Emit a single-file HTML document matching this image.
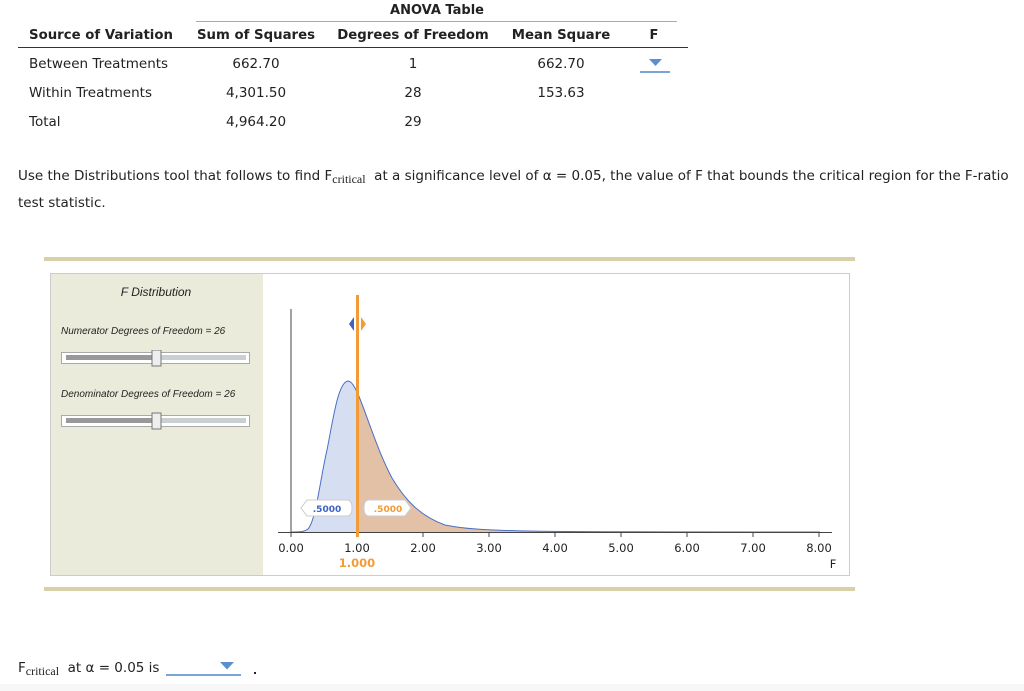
<!DOCTYPE html>
<html><head><meta charset="utf-8"><style>
body{margin:0;width:1024px;height:691px;background:#fff;font-family:"DejaVu Sans","Liberation Sans",sans-serif;color:#222;position:relative;overflow:hidden}
.a{position:absolute;white-space:nowrap}
.b{font-weight:bold;font-size:13px}
.t{font-size:13.5px}
.c{transform:translateX(-50%)}
.i{font-family:"Liberation Sans",sans-serif;font-style:italic;font-size:11px;color:#222}
</style></head><body>
<div class="a b c" style="left:437px;top:3px">ANOVA Table</div>
<div style="position:absolute;left:196px;top:21px;width:481px;height:1px;background:#aaa"></div>
<div class="a b" style="left:29px;top:28px;font-size:13.3px">Source of Variation</div>
<div class="a b c" style="left:256px;top:28px;font-size:13.3px">Sum of Squares</div>
<div class="a b c" style="left:413px;top:28px;font-size:13.3px">Degrees of Freedom</div>
<div class="a b c" style="left:561px;top:28px;font-size:13.3px">Mean Square</div>
<div class="a b c" style="left:654px;top:28px">F</div>
<div style="position:absolute;left:18px;top:47px;width:670px;height:1px;background:#333"></div>
<div class="a t" style="left:29px;top:56px">Between Treatments</div>
<div class="a t c" style="left:256px;top:56px">662.70</div>
<div class="a t c" style="left:413px;top:56px">1</div>
<div class="a t c" style="left:561px;top:56px">662.70</div>
<svg class="a" style="left:640px;top:58px" width="30" height="16"><path d="M9 1h13l-6.5 7z" fill="#5b8fd0"/><rect x="0" y="13" width="30" height="2" fill="#7aa3d6"/></svg>
<div class="a t" style="left:29px;top:85px">Within Treatments</div>
<div class="a t c" style="left:256px;top:85px">4,301.50</div>
<div class="a t c" style="left:413px;top:85px">28</div>
<div class="a t c" style="left:561px;top:85px">153.63</div>
<div class="a t" style="left:29px;top:114px">Total</div>
<div class="a t c" style="left:256px;top:114px">4,964.20</div>
<div class="a t c" style="left:413px;top:114px">29</div>
<div class="a t" style="left:18px;top:168px">Use the Distributions tool that follows to find F<span style="font-family:'Liberation Serif',serif;font-size:12px;position:relative;top:3px">critical</span>&nbsp; at a significance level of α = 0.05, the value of F that bounds the critical region for the F-ratio</div>
<div class="a t" style="left:18px;top:195px">test statistic.</div>
<div style="position:absolute;left:44px;top:257px;width:811px;height:4px;background:#d8d0a8"></div>
<div style="position:absolute;left:44px;top:587px;width:811px;height:4px;background:#d8d0a8"></div>
<div style="position:absolute;left:50px;top:273px;width:798px;height:301px;border:1px solid #ccc;background:#fff"></div>
<div style="position:absolute;left:51px;top:274px;width:212px;height:301px;background:#ebebdc"></div>
<div class="a i c" style="left:156px;top:285px;font-size:12px">F Distribution</div>
<div class="a i" style="left:61px;top:326px;font-size:10px">Numerator Degrees of Freedom = 26</div>
<div class="a i" style="left:61px;top:389px;font-size:10px">Denominator Degrees of Freedom = 26</div>
<svg class="a" style="left:60px;top:350px" width="192" height="80">
<g><rect x="1.5" y="2.5" width="188" height="11" fill="#fff" stroke="#aaa"/><rect x="6" y="5" width="90" height="5" fill="#999"/><rect x="96" y="5" width="90" height="5" fill="#c8d0d0"/><rect x="92" y="0" width="9" height="16" fill="#eee" stroke="#777"/></g>
<g transform="translate(0,63)"><rect x="1.5" y="2.5" width="188" height="11" fill="#fff" stroke="#aaa"/><rect x="6" y="5" width="90" height="5" fill="#999"/><rect x="96" y="5" width="90" height="5" fill="#c8d0d0"/><rect x="92" y="0" width="9" height="16" fill="#eee" stroke="#777"/></g>
</svg>
<svg class="a" style="left:0;top:0" width="1024" height="691">
<path d="M291 532 C300 532 304 532 308 529 C316 520 320 480 327 450 C333 420 338 382 348 381 C352 381 355 388 358 394 C368 418 378 452 392 478 C405 500 420 516 445 525 C480 532 520 532 820 532 L291 532Z" fill="#d6dff2"/>
<path d="M357 392 C368 418 378 452 392 478 C405 500 420 516 445 525 C480 532 520 532 820 532 L357 532 Z" fill="#e2c1a6"/>
<path d="M291 532 C300 532 304 532 308 529 C316 520 320 480 327 450 C333 420 338 382 348 381 C352 381 355 388 358 394 C368 418 378 452 392 478 C405 500 420 516 445 525 C480 532 520 532 820 532" fill="none" stroke="#4a6fc8" stroke-width="1"/>
<line x1="291" y1="309" x2="291" y2="532" stroke="#444"/>
<line x1="278" y1="532.5" x2="832" y2="532.5" stroke="#444"/>
<g stroke="#444"><line x1="291" y1="532" x2="291" y2="537"/><line x1="357" y1="532" x2="357" y2="537"/><line x1="423" y1="532" x2="423" y2="537"/><line x1="489" y1="532" x2="489" y2="537"/><line x1="555" y1="532" x2="555" y2="537"/><line x1="621" y1="532" x2="621" y2="537"/><line x1="687" y1="532" x2="687" y2="537"/><line x1="753" y1="532" x2="753" y2="537"/><line x1="819" y1="532" x2="819" y2="537"/></g>
<rect x="356" y="295" width="3" height="242" fill="#f39b36"/>
<path d="M354 317 L349 324 L354 331 Z" fill="#3d62c4"/>
<path d="M361 317 L366 324 L361 331 Z" fill="#f39b36"/>
<path d="M307 500 H347 Q352 500 352 508 Q352 516 347 516 H307 L301 508 Z" fill="#fff" stroke="#ccc"/>
<path d="M369 500 H405 L411 508 L405 516 H369 Q364 516 364 508 Q364 500 369 500 Z" fill="#fff" stroke="#ccc"/>
<g font-family="DejaVu Sans,sans-serif" font-size="9" font-weight="bold" text-anchor="middle"><text x="327" y="512" fill="#3d62c4">.5000</text><text x="388" y="512" fill="#f39b36">.5000</text></g>
<g font-family="DejaVu Sans,sans-serif" font-size="11.5" fill="#222" text-anchor="middle"><text x="291" y="552">0.00</text><text x="357" y="552">1.00</text><text x="423" y="552">2.00</text><text x="489" y="552">3.00</text><text x="555" y="552">4.00</text><text x="621" y="552">5.00</text><text x="687" y="552">6.00</text><text x="753" y="552">7.00</text><text x="819" y="552">8.00</text><text x="833" y="568">F</text></g>
<text x="357" y="567" font-family="DejaVu Sans,sans-serif" font-size="11.5" font-weight="bold" fill="#f39b36" text-anchor="middle">1.000</text>
</svg>
<div class="a t" style="left:18px;top:660px">F<span style="font-family:'Liberation Serif',serif;font-size:12px;position:relative;top:3px">critical</span>&nbsp; at α = 0.05 is</div>
<svg class="a" style="left:166px;top:660px" width="100" height="18"><path d="M54 2h14l-7 7.5z" fill="#5b8fd0"/><rect x="0" y="14" width="75" height="2" fill="#7aa3d6"/><rect x="88" y="12" width="2" height="2" fill="#222"/></svg>
<div style="position:absolute;left:0;top:684px;width:1024px;height:7px;background:#f7f7f7"></div>
</body></html>
